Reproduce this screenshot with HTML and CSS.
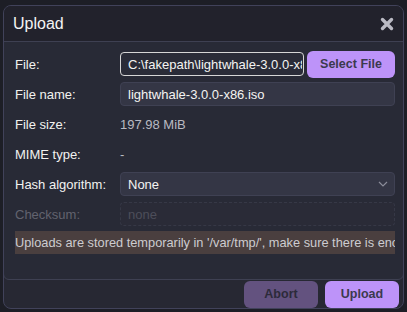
FILE: index.html
```html
<!DOCTYPE html>
<html>
<head>
<meta charset="utf-8">
<link rel="stylesheet" href="styles.css">
</head>
<body>
<div class="dialog">
  <div class="header">
    <span class="title">Upload</span>
    <svg class="close" width="16" height="16" viewBox="0 0 16 16"><path d="M3.5 3.5 L12.5 12.5 M12.5 3.5 L3.5 12.5" stroke="#babac4" stroke-width="3.4" stroke-linecap="round"/></svg>
  </div>
  <div class="body">
    <div class="grid">
      <label class="lbl">File:</label>
      <div class="filerow">
        <div class="input focus"><span class="clip">C:\fakepath\lightwhale-3.0.0-x86.iso</span></div>
        <button class="btn primary">Select File</button>
      </div>
      <label class="lbl">File name:</label>
      <div class="input">lightwhale-3.0.0-x86.iso</div>
      <label class="lbl">File size:</label>
      <div class="val">197.98 MiB</div>
      <label class="lbl">MIME type:</label>
      <div class="val">-</div>
      <label class="lbl">Hash algorithm:</label>
      <div class="input select">None<svg class="chev" width="10" height="6" viewBox="0 0 10 6"><path d="M1 1 L5 5 L9 1" fill="none" stroke="#8a8c99" stroke-width="1.2"/></svg></div>
      <label class="lbl dis">Checksum:</label>
      <div class="input disabled">none</div>
    </div>
    <div class="warn">Uploads are stored temporarily in '/var/tmp/', make sure there is enough free space.</div>
  </div>
  <div class="footer">
    <button class="btn abort">Abort</button>
    <button class="btn primary">Upload</button>
  </div>
</div>
</body>
</html>
```
FILE: styles.css
```css
html, body { margin: 0; padding: 0; }
body {
  background: #1d1e26;
  font-family: "Liberation Sans", Arial, sans-serif;
  font-size: 13px;
  color: #f2f2f0;
  width: 407px;
  height: 312px;
  overflow: hidden;
}
.dialog {
  margin: 5px 0 0 3px;
  width: 399px;
  height: 302px;
  border: 1px solid #41425a;
  border-radius: 8px;
  background: #272833;
  display: flex;
  flex-direction: column;
  overflow: hidden;
}
.header {
  height: 35px;
  background: #22222c;
  display: flex;
  align-items: center;
  justify-content: space-between;
  padding: 0 8px 0 9px;
}
.title { font-size: 16px; color: #f4f4f4; }
.close { display: block; }
.body {
  margin: 0 -1px;
  height: 227px;
  border: 1px solid #3e4052;
  border-radius: 0 0 6px 6px;
  background: #282a36;
  padding: 10px 9px 0 11px;
  overflow: hidden;
}
.grid {
  display: grid;
  grid-template-columns: 105px 275px;
  grid-auto-rows: 24px;
  row-gap: 6px;
  align-items: center;
}
.grid > .filerow { height: 26px; }
.lbl { color: #f2f2f0; }
.lbl.dis { color: #62636f; }
.val { color: #b9bac2; }
.filerow { display: flex; gap: 3px; align-items: center; }
.input {
  box-sizing: border-box;
  height: 24px;
  border: 1px solid #3f4153;
  border-radius: 4px;
  background: #343645;
  padding: 0 7px;
  display: flex;
  align-items: center;
  white-space: nowrap;
  overflow: hidden;
  color: #f4f4f2;
}
.input.focus {
  width: 184px;
  border-color: #d6d6d6;
  background: #2a2c38;
  flex: none;
}
.clip { display: block; overflow: hidden; width: 174px; flex: none; }
.input.select { justify-content: space-between; padding-right: 6px; }
.chev { display: block; }
.input.disabled {
  background: #2a2b37;
  border: 1px dashed #363846;
  color: #4d4e5a;
}
.btn {
  font-family: "Liberation Sans", Arial, sans-serif;
  font-size: 12.5px;
  font-weight: bold;
  border: none;
  border-radius: 6px;
  height: 27px;
  width: 88px;
  color: #3b3a4e;
  padding: 0;
}
.primary { background: #bd93f9; }
.grid .primary { width: 88px; flex: none; }
.warn {
  margin-top: 5px;
  width: 380px;
  height: 23px;
  background: #4a3f3f;
  color: #cdccd0;
  white-space: nowrap;
  overflow: hidden;
  line-height: 23px;
  font-size: 12.8px;
}
.footer {
  flex: 1;
  display: flex;
  justify-content: flex-end;
  align-items: center;
  gap: 7px;
  padding: 0 4px 0 0;
}
.footer .btn { width: 74px; }
.abort { background: #63527f; color: #2c2a3a; }
```
